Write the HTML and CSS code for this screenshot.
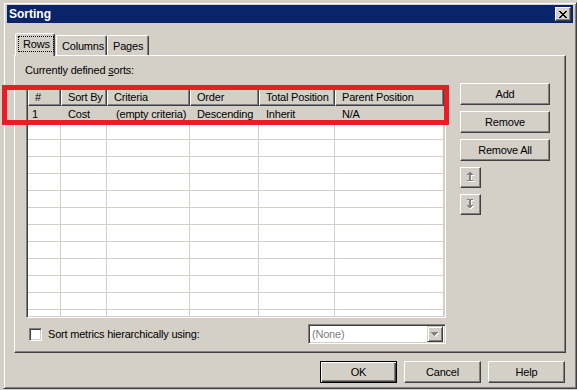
FILE: index.html
```html
<!DOCTYPE html>
<html>
<head>
<meta charset="utf-8">
<link rel="stylesheet" href="styles.css">
</head>
<body>
<div class="window">
  <div class="titlebar">
    <span class="title">Sorting</span>
    <span class="close">
      <svg width="8" height="7" viewBox="0 0 8 7" shape-rendering="crispEdges"><path d="M0 0h2v1h-2zM6 0h2v1h-2zM1 1h2v1h-2zM5 1h2v1h-2zM2 2h4v1h-4zM3 3h2v1h-2zM2 4h4v1h-4zM1 5h2v1h-2zM5 5h2v1h-2zM0 6h2v1h-2zM6 6h2v1h-2z" fill="#000"/></svg>
    </span>
  </div>
  <div class="tabs">
    <div class="tab active"><span class="focus">Rows</span></div>
    <div class="tab">Columns</div>
    <div class="tab">Pages</div>
  </div>
  <div class="panel">
    <div class="label">Currently defined <u>s</u>orts:</div>
    <div class="main">
      <div class="grid">
        <div class="row head">
          <div class="hc">#</div><div class="hc">Sort By</div><div class="hc">Criteria</div><div class="hc">Order</div><div class="hc">Total Position</div><div class="hc">Parent Position</div>
        </div>
        <div class="row sel">
          <div class="c num">1</div><div class="c">Cost</div><div class="c crit">(empty criteria)</div><div class="c">Descending</div><div class="c">Inherit</div><div class="c">N/A</div>
        </div>
        <div class="row"><div class="c"></div><div class="c"></div><div class="c"></div><div class="c"></div><div class="c"></div><div class="c"></div></div>
        <div class="row"><div class="c"></div><div class="c"></div><div class="c"></div><div class="c"></div><div class="c"></div><div class="c"></div></div>
        <div class="row"><div class="c"></div><div class="c"></div><div class="c"></div><div class="c"></div><div class="c"></div><div class="c"></div></div>
        <div class="row"><div class="c"></div><div class="c"></div><div class="c"></div><div class="c"></div><div class="c"></div><div class="c"></div></div>
        <div class="row"><div class="c"></div><div class="c"></div><div class="c"></div><div class="c"></div><div class="c"></div><div class="c"></div></div>
        <div class="row"><div class="c"></div><div class="c"></div><div class="c"></div><div class="c"></div><div class="c"></div><div class="c"></div></div>
        <div class="row"><div class="c"></div><div class="c"></div><div class="c"></div><div class="c"></div><div class="c"></div><div class="c"></div></div>
        <div class="row"><div class="c"></div><div class="c"></div><div class="c"></div><div class="c"></div><div class="c"></div><div class="c"></div></div>
        <div class="row"><div class="c"></div><div class="c"></div><div class="c"></div><div class="c"></div><div class="c"></div><div class="c"></div></div>
        <div class="row"><div class="c"></div><div class="c"></div><div class="c"></div><div class="c"></div><div class="c"></div><div class="c"></div></div>
        <div class="row"><div class="c"></div><div class="c"></div><div class="c"></div><div class="c"></div><div class="c"></div><div class="c"></div></div>
        <div class="row"><div class="c"></div><div class="c"></div><div class="c"></div><div class="c"></div><div class="c"></div><div class="c"></div></div>
      </div>
      <div class="side">
        <div class="btn wide">Add</div>
        <div class="btn wide">Remove</div>
        <div class="btn wide">Remove All</div>
        <div class="btn small">
          <svg width="7" height="11" viewBox="0 0 7 11" shape-rendering="crispEdges">
            <path transform="translate(1 1)" d="M2 0h2v1h-2zM1 1h4v1h-4zM0 2h6v1h-6zM2 3h2v5h-2zM0 8h6v1h-6z" fill="#fff"/>
            <path d="M2 0h2v1h-2zM1 1h4v1h-4zM0 2h6v1h-6zM2 3h2v5h-2zM0 8h6v1h-6z" fill="#808080"/>
          </svg>
        </div>
        <div class="btn small">
          <svg width="7" height="11" viewBox="0 0 7 11" shape-rendering="crispEdges">
            <path transform="translate(1 1)" d="M0 0h6v1h-6zM2 1h2v5h-2zM0 6h6v1h-6zM1 7h4v1h-4zM2 8h2v1h-2z" fill="#fff"/>
            <path d="M0 0h6v1h-6zM2 1h2v5h-2zM0 6h6v1h-6zM1 7h4v1h-4zM2 8h2v1h-2z" fill="#808080"/>
          </svg>
        </div>
      </div>
    </div>
    <div class="bottom">
      <span class="check"></span>
      <span class="check-label">Sort metrics hierarchically using:</span>
      <div class="combo">
        <span class="combo-text">(None)</span>
        <span class="combo-btn">
          <svg width="8" height="5" viewBox="0 0 8 5" shape-rendering="crispEdges">
            <path transform="translate(1 1)" d="M0 0h7v1h-7zM1 1h5v1h-5zM2 2h3v1h-3zM3 3h1v1h-1z" fill="#fff"/>
            <path d="M0 0h7v1h-7zM1 1h5v1h-5zM2 2h3v1h-3zM3 3h1v1h-1z" fill="#808080"/>
          </svg>
        </span>
      </div>
    </div>
  </div>
  <div class="actions">
    <div class="btn action default">OK</div>
    <div class="btn action">Cancel</div>
    <div class="btn action">Help</div>
  </div>
</div>
<div class="mark"></div>
</body>
</html>
```

FILE: styles.css
```css
html, body {
  margin: 0;
  padding: 0;
  background: #d4d0c8;
}
body {
  position: relative;
  width: 577px;
  height: 390px;
  overflow: hidden;
  font-family: "Liberation Sans", Arial, sans-serif;
  font-size: 11px;
  letter-spacing: -0.2px;
  color: #000;
}
.window {
  margin: 2px 0 0 3px;
  width: 574px;
  height: 387px;
  box-sizing: border-box;
  border: 1px solid;
  border-color: #d4d0c8 #404040 #404040 #d4d0c8;
  box-shadow: inset 1px 1px #fff, inset -1px -1px #808080;
  padding: 2px 3px 0 3px;
}
.titlebar {
  height: 18px;
  background: #0a246a;
  display: flex;
  align-items: center;
  justify-content: space-between;
  padding: 0 2px;
}
.title {
  color: #fff;
  font-weight: bold;
  font-size: 12px;
  letter-spacing: 0;
}
.close {
  width: 16px;
  height: 14px;
  box-sizing: border-box;
  background: #d4d0c8;
  border: 1px solid;
  border-color: #fff #404040 #404040 #fff;
  box-shadow: inset -1px -1px #808080;
  display: flex;
  align-items: center;
  justify-content: center;
  padding-right: 1px;
}
.close svg { display: block; }
.tabs {
  margin-top: 10px;
  margin-left: 8px;
  height: 22px;
  display: flex;
  align-items: flex-end;
}
.tab {
  height: 20px;
  box-sizing: border-box;
  border-top: 1px solid #fff;
  border-left: 1px solid #fff;
  border-right: 1px solid #404040;
  box-shadow: inset -1px 0 #808080;
  border-radius: 2px 2px 0 0;
  background: #d4d0c8;
  padding: 3px 0 0 5px;
  line-height: 14px;
}
.tab:nth-child(2) { width: 51px; margin-left: 1px; }
.tab:nth-child(3) { width: 42px; }
.tab.active {
  width: 40px;
  height: 23px;
  margin-bottom: -1px;
  position: relative;
  z-index: 1;
  padding: 2px 0 0 2px;
}
.focus {
  display: inline-block;
  border: 1px dotted #000;
  padding: 0 3px 0 4px;
  line-height: 14px;
}
.panel {
  margin-left: 7px;
  width: 552px;
  height: 298px;
  box-sizing: border-box;
  border: 1px solid;
  border-color: #fff #404040 #404040 #fff;
  box-shadow: inset -1px -1px #808080;
  padding: 8px 0 0 10px;
}
.label {
  line-height: 13px;
}
.main {
  margin-top: 6px;
  display: flex;
  align-items: flex-start;
}
.grid {
  margin-top: 4px;
  margin-left: 1px;
  width: 420px;
  height: 231px;
  box-sizing: border-box;
  border: 1px solid;
  border-color: #808080 #fff #fff #808080;
  box-shadow: inset 1px 1px #404040, inset -1px -1px #d4d0c8;
  padding: 1px;
  background: #fff;
  overflow: hidden;
}
.row {
  display: grid;
  grid-template-columns: 33px 46px 83px 69px 76px 109px;
}
.hc {
  height: 17px;
  box-sizing: border-box;
  background: #d4d0c8;
  border-top: 1px solid #fff;
  border-left: 1px solid #fff;
  border-right: 1px solid #404040;
  border-bottom: 1px solid #404040;
  box-shadow: inset -1px -1px #808080;
  padding-left: 6px;
  line-height: 15px;
  white-space: nowrap;
  overflow: hidden;
}
.c {
  height: 17px;
  box-sizing: border-box;
  border-right: 1px solid #d4d0c8;
  border-bottom: 1px solid #d4d0c8;
  padding-left: 7px;
  line-height: 16px;
  white-space: nowrap;
  overflow: hidden;
}
.sel .c { background: #d4d0c8; }
.c.num { padding-left: 4px; }
.c.crit { padding-left: 9px; }
.side {
  margin-left: 14px;
  display: flex;
  flex-direction: column;
  gap: 6px;
}
.btn {
  box-sizing: border-box;
  background: #d4d0c8;
  border: 1px solid;
  border-color: #fff #404040 #404040 #fff;
  box-shadow: inset -1px -1px #808080;
  display: flex;
  align-items: center;
  justify-content: center;
}
.btn.wide {
  width: 90px;
  height: 22px;
}
.btn.small {
  width: 21px;
  height: 21px;
}
.btn svg { display: block; }
.bottom {
  margin-top: 6px;
  width: 421px;
  height: 20px;
  display: flex;
  align-items: center;
}
.check {
  margin-left: 4px;
  width: 13px;
  height: 13px;
  box-sizing: border-box;
  background: #fff;
  border: 1px solid;
  border-color: #808080 #fff #fff #808080;
  box-shadow: inset 1px 1px #404040, inset -1px -1px #d4d0c8;
}
.check-label {
  margin-left: 6px;
}
.combo {
  margin-left: auto;
  width: 138px;
  height: 20px;
  box-sizing: border-box;
  background: #fff;
  border: 1px solid;
  border-color: #808080 #fff #fff #808080;
  box-shadow: inset 1px 1px #404040, inset -1px -1px #d4d0c8;
  padding: 2px;
  display: flex;
  align-items: center;
}
.combo-text {
  color: #808080;
  padding-left: 1px;
  flex: 1;
}
.combo-btn {
  width: 16px;
  height: 16px;
  box-sizing: border-box;
  background: #d4d0c8;
  border: 1px solid;
  border-color: #d4d0c8 #404040 #404040 #d4d0c8;
  box-shadow: inset 1px 1px #fff, inset -1px -1px #808080;
  display: flex;
  align-items: center;
  justify-content: center;
}
.actions {
  margin-top: 8px;
  margin-left: 7px;
  width: 552px;
  box-sizing: border-box;
  padding-right: 1px;
  display: flex;
  justify-content: flex-end;
  gap: 7px;
}
.btn.action {
  width: 77px;
  height: 22px;
}
.btn.default {
  border-color: #000;
  box-shadow: inset 1px 1px #fff, inset -1px -1px #404040, inset -2px -2px #808080;
}
.mark {
  position: absolute;
  left: 2px;
  top: 85px;
  width: 447px;
  height: 40px;
  box-sizing: border-box;
  border: 5px solid #ed1c24;
}
```
